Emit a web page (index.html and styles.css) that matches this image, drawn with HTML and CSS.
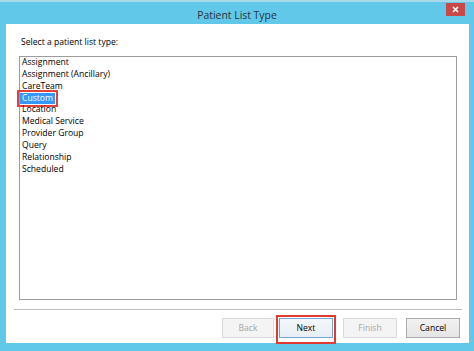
FILE: index.html
```
<html>
	<head>
		<title>Patient List Type</title>
		<meta name="viewport" content="width=device-width,initial-scale=1">
		<link rel="stylesheet" href="styles.css">
	</head>
	<body>
		<div class="window">
			<div class="titlebar">
				<span></span>
				<h1 class="title">Patient List Type</h1>
				<div class="close-wrap">
					<a class="close" href="javascript:void(0);">
						<svg width="7" height="7" viewBox="0 0 7 7"><path d="M1 1 L6 6 M6 1 L1 6" stroke="#fff" stroke-width="1.6"/></svg>
					</a>
				</div>
			</div>
			<div class="client">
				<p class="prompt">Select a patient list type:</p>
				<ul class="listbox">
					<li>Assignment</li>
					<li>Assignment (Ancillary)</li>
					<li>CareTeam</li>
					<li><span class="selected">Custom</span></li>
					<li>Location</li>
					<li>Medical Service</li>
					<li>Provider Group</li>
					<li>Query</li>
					<li>Relationship</li>
					<li>Scheduled</li>
				</ul>
				<div class="separator"></div>
				<div class="buttons">
					<button class="btn btn-back" disabled>Back</button>
					<span class="callout"><button class="btn btn-default">Next</button></span>
					<button class="btn btn-finish" disabled>Finish</button>
					<button class="btn">Cancel</button>
				</div>
			</div>
		</div>
	</body>
</html>
```

FILE: styles.css
```
* {
	margin: 0;
	padding: 0;
	box-sizing: border-box;
}

body {
	width: 474px;
	height: 351px;
	overflow: hidden;
	background: #62c8ea;
	font-family: 'Open Sans', 'Noto Sans', sans-serif;
	font-size: 8.6px;
	color: #000;
}

.window {
	height: 351px;
	display: flex;
	flex-direction: column;
	border-top: 2px solid #a9d9ea;
}

.titlebar {
	height: 22px;
	display: grid;
	grid-template-columns: 1fr auto 1fr;
	align-items: start;
}

.title {
	font-size: 10.4px;
	font-weight: 400;
	color: #24343a;
	line-height: 12px;
	padding-top: 7px;
}

.close-wrap {
	display: flex;
	justify-content: flex-end;
	padding: 1px 9px 0 0;
}

.close {
	width: 19px;
	height: 13px;
	background: #c9494a;
	display: flex;
	align-items: center;
	justify-content: center;
}

.client {
	flex: 1;
	background: #fff;
	margin: 0 5px 8px 6px;
	display: flex;
	flex-direction: column;
}

.prompt {
	line-height: 12px;
	padding: 12px 0 0 15px;
	height: 32px;
}

.listbox {
	list-style: none;
	margin: 0 12px 0 13px;
	height: 244px;
	border: 1px solid #9c9c9c;
}

.listbox li {
	line-height: 11.85px;
	height: 11.85px;
	padding-left: 2px;
}

.selected {
	display: inline-block;
	background: #3399ff;
	color: #fff;
	margin-left: -2px;
	padding: 0 2px;
	line-height: 11px;
	outline: 2px solid #e2423a;
	outline-offset: 1px;
}

.separator {
	margin: 9px 7px 0 8px;
	border-top: 1px solid #bdbdbd;
}

.buttons {
	display: flex;
	justify-content: flex-end;
	align-items: center;
	padding: 7px 9px 0 0;
}

.btn {
	width: 54px;
	height: 20px;
	font-family: inherit;
	font-size: 8.6px;
	color: #000;
	background: linear-gradient(#f2f2f2, #e5e5e5);
	border: 1px solid #acacac;
}

.btn:disabled {
	color: #a6a6a6;
	background: #f4f4f4;
	border-color: #dadada;
}

.btn-back {
	width: 52px;
}

.btn-default {
	background: linear-gradient(#f4f8fc, #e8eef5);
	border-color: #6fa6d6;
}

.callout {
	display: flex;
	padding: 1px 1px 4px 1px;
	border: 2px solid #df3b33;
	margin: -2px -3px -6px 2px;
}

.btn-finish {
	margin-left: 10px;
}

.btn + .btn {
	margin-left: 9px;
}
```
